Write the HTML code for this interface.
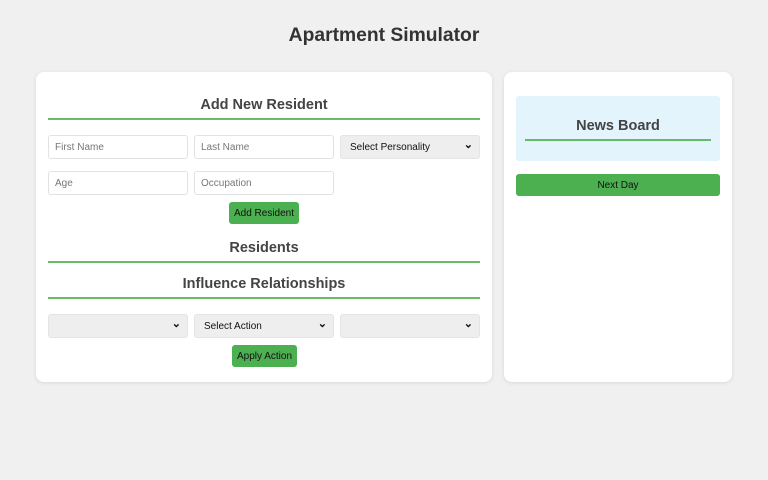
<!DOCTYPE html>
<html><head><style>
body{margin:0;width:768px;height:480px;background:#f0f0f0;font-family:"Liberation Sans",Arial,sans-serif;position:relative;overflow:hidden}
.a{position:absolute;box-sizing:border-box}
.t{position:absolute;left:0;width:768px;text-align:center;top:25px;font-size:19.3px;font-weight:bold;color:#333}
.p{background:#fff;border-radius:8px;box-shadow:0 1px 4px rgba(0,0,0,.1)}
.h{text-align:center;font-size:14.5px;font-weight:bold;color:#444;line-height:18px}
.l{height:2px;background:#4CAF50;opacity:.85}
.i,.s,.b{display:flex;align-items:center;padding-top:1px}
.i{border:1px solid #e2e2e2;border-radius:3px;font-size:10px;color:#777;padding-left:6px;background:#fff}
.s{background:#eee;border:1px solid #e4e4e4;border-radius:3px;font-size:10px;color:#111;padding-left:9px}
.s:after{content:"⌄";position:absolute;right:6px;top:2px;font-size:11px;font-weight:bold}
.b{background:#4CAF50;border-radius:3px;font-size:10px;color:#111;justify-content:center}
</style></head><body>
<div class="t">Apartment Simulator</div>
<div class="a p" style="left:36px;top:72px;width:456px;height:310px"></div>
<div class="a p" style="left:504px;top:72px;width:228px;height:310px"></div>
<div class="a h" style="left:48px;top:96px;width:432px">Add New Resident</div>
<div class="a l" style="left:48px;top:118px;width:432px"></div>
<div class="a i" style="left:48px;top:135px;width:140px;height:24px">First Name</div>
<div class="a i" style="left:194px;top:135px;width:140px;height:24px">Last Name</div>
<div class="a s" style="left:340px;top:135px;width:140px;height:24px">Select Personality</div>
<div class="a i" style="left:48px;top:171px;width:140px;height:24px">Age</div>
<div class="a i" style="left:194px;top:171px;width:140px;height:24px">Occupation</div>
<div class="a b" style="left:229px;top:202px;width:70px;height:22px">Add Resident</div>
<div class="a h" style="left:48px;top:239px;width:432px">Residents</div>
<div class="a l" style="left:48px;top:261px;width:432px"></div>
<div class="a h" style="left:48px;top:275px;width:432px">Influence Relationships</div>
<div class="a l" style="left:48px;top:297px;width:432px"></div>
<div class="a s" style="left:48px;top:314px;width:140px;height:24px"></div>
<div class="a s" style="left:194px;top:314px;width:140px;height:24px">Select Action</div>
<div class="a s" style="left:340px;top:314px;width:140px;height:24px"></div>
<div class="a b" style="left:232px;top:345px;width:65px;height:22px">Apply Action</div>
<div class="a" style="left:516px;top:96px;width:204px;height:65px;background:#e3f4fd;border-radius:3px"></div>
<div class="a h" style="left:516px;top:117px;width:204px">News Board</div>
<div class="a l" style="left:525px;top:139px;width:186px;height:1.5px"></div>
<div class="a b" style="left:516px;top:174px;width:204px;height:22px">Next Day</div>
</body></html>
